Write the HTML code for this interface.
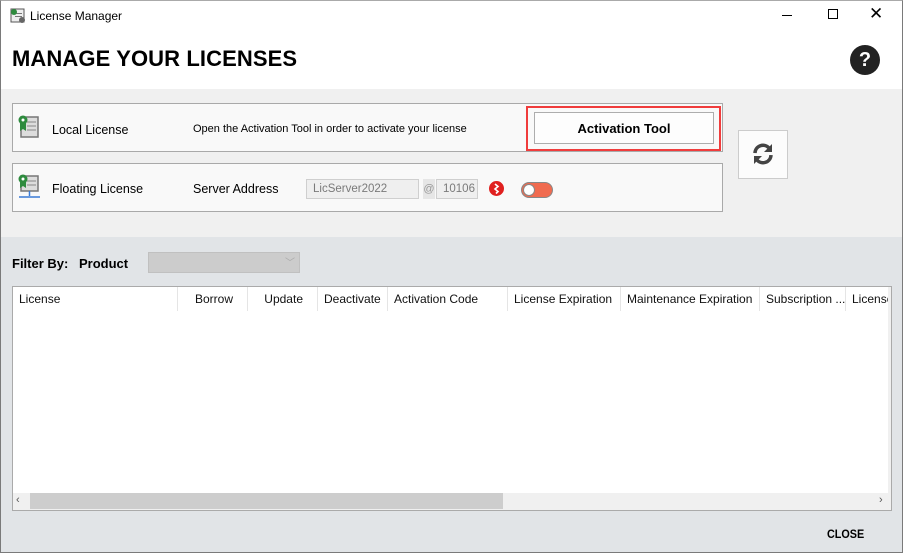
<!DOCTYPE html>
<html><head><meta charset="utf-8"><style>
*{margin:0;padding:0;box-sizing:border-box}
body{width:903px;height:553px;overflow:hidden;font-family:"Liberation Sans",sans-serif;font-size:12px;color:#000;background:#fff;position:relative}
.win{position:absolute;left:0;top:0;width:903px;height:553px;border:1px solid #7a7a7a;border-top:1px solid #aaa}
.abs{position:absolute}
.panel{position:absolute;background:#f9f9f9;border:1px solid #a9a9a9}
.inp{position:absolute;background:#efefef;border:1px solid #cfcfcf;color:#7a7a7a;font-size:11.5px;padding:3px 6px}
.th{position:absolute;top:0;height:24px;line-height:24px;font-size:12px;color:#111;border-right:1px solid #e5e5e5;padding-left:6px;white-space:nowrap;overflow:hidden}
</style></head><body>
<div class="abs" style="left:1px;top:89px;width:901px;height:148px;background:#f0f0f0"></div>
<div class="abs" style="left:1px;top:237px;width:901px;height:315px;background:#e1e4e7"></div>
<div class="win"></div>
<svg class="abs" style="left:10px;top:8px" width="16" height="16" viewBox="0 0 16 16"><rect x="1" y="1" width="13" height="13" fill="#eee" stroke="#555"/><rect x="5" y="5" width="7" height="1" fill="#777"/><rect x="5" y="8" width="7" height="1" fill="#777"/><circle cx="4" cy="4" r="3" fill="#2e8b3e"/><circle cx="12" cy="12" r="3" fill="#666"/></svg>
<div class="abs" style="left:30px;top:9px;font-size:12px">License Manager</div>
<div class="abs" style="left:782px;top:15px;width:10px;height:1px;background:#000"></div>
<div class="abs" style="left:828px;top:9px;width:10px;height:10px;border:1px solid #000"></div>
<div class="abs" style="left:869px;top:4px;font-size:17px;font-weight:300">✕</div>
<div class="abs" style="left:12px;top:46px;font-size:22px;font-weight:bold;letter-spacing:0.1px">MANAGE YOUR LICENSES</div>
<div class="abs" style="left:850px;top:45px;width:30px;height:30px;border-radius:50%;background:#222;color:#fff;font-weight:bold;font-size:20px;text-align:center;line-height:30px">?</div>
<div class="panel" style="left:12px;top:103px;width:711px;height:49px"></div>
<div class="panel" style="left:12px;top:163px;width:711px;height:49px"></div>
<svg class="abs" style="left:17px;top:114px" width="26" height="26" viewBox="0 0 26 26"><rect x="4" y="3" width="17" height="20" fill="#ddd" stroke="#777" stroke-width="1.5"/><path d="M10 8h9M10 12h9M10 16h9" stroke="#888"/><path d="M3 8v9l3-2 3 2v-9" fill="#2e8b3e"/><circle cx="6" cy="6" r="4.5" fill="#2e8b3e"/><circle cx="6" cy="6" r="1.5" fill="#fff"/></svg>
<svg class="abs" style="left:17px;top:173px" width="26" height="30" viewBox="0 0 26 30"><rect x="4" y="3" width="17" height="15" fill="#ddd" stroke="#777" stroke-width="1.5"/><path d="M10 8h9M10 12h9" stroke="#888"/><path d="M3 8v7l3-2 3 2v-7" fill="#2e8b3e"/><circle cx="6" cy="6" r="4.5" fill="#2e8b3e"/><circle cx="6" cy="6" r="1.5" fill="#fff"/><path d="M12.5 18v5M2 24h21" stroke="#3a7bd5" stroke-width="1.5"/></svg>
<div class="abs" style="left:52px;top:123px;font-size:12.5px">Local License</div>
<div class="abs" style="left:193px;top:123px;font-size:11px">Open the Activation Tool in order to activate your license</div>
<div class="abs" style="left:526px;top:106px;width:195px;height:45px;border:2px solid #f03c3c"></div>
<div class="abs" style="left:534px;top:112px;width:180px;height:32px;border:1px solid #adadad;background:#fdfdfd;text-align:center;line-height:31px;font-weight:bold;font-size:13px">Activation Tool</div>
<div class="abs" style="left:52px;top:182px;font-size:12.5px">Floating License</div>
<div class="abs" style="left:193px;top:182px;font-size:12.5px">Server Address</div>
<div class="inp" style="left:306px;top:179px;width:113px;height:20px">LicServer2022</div>
<div class="abs" style="left:423px;top:179px;width:12px;height:20px;background:#e6e6e6;color:#999;font-size:11px;line-height:20px;text-align:center">@</div>
<div class="inp" style="left:436px;top:179px;width:42px;height:20px">10106</div>
<svg class="abs" style="left:489px;top:181px" width="15" height="15" viewBox="0 0 15 15"><circle cx="7.5" cy="7.5" r="7.5" fill="#e0201f"/><path d="M6 3l3 2.5-3 2.5 3 2.5-2 2" fill="none" stroke="#fff" stroke-width="1.6"/></svg>
<div class="abs" style="left:521px;top:182px;width:32px;height:16px;border-radius:8px;background:#f06b50;border:1px solid #888"></div>
<div class="abs" style="left:523px;top:184px;width:12px;height:12px;border-radius:50%;background:#fff;border:1px solid #888"></div>
<div class="abs" style="left:738px;top:130px;width:50px;height:49px;background:#fcfcfc;border:1px solid #ccc"></div>
<svg class="abs" style="left:751px;top:142px" width="24" height="24" viewBox="0 0 24 24"><path d="M4 11a8 8 0 0 1 14-5" fill="none" stroke="#444" stroke-width="3.5"/><path d="M21 2v8h-8z" fill="#444"/><path d="M20 13a8 8 0 0 1-14 5" fill="none" stroke="#444" stroke-width="3.5"/><path d="M3 22v-8h8z" fill="#444"/></svg>
<div class="abs" style="left:12px;top:256px;font-weight:bold;font-size:13px">Filter By:</div>
<div class="abs" style="left:79px;top:256px;font-weight:bold;font-size:13px">Product</div>
<div class="abs" style="left:148px;top:252px;width:152px;height:21px;background:#ccc;border:1px solid #c0c0c0"></div>
<div class="abs" style="left:285px;top:254px;color:#aaa;font-size:10px">﹀</div>
<div class="abs" style="left:12px;top:286px;width:880px;height:225px;background:#fff;border:1px solid #aaa;overflow:hidden">
<div class="th" style="left:0;width:165px">License</div>
<div class="th" style="left:165px;width:70px;text-align:right;padding-right:14px">Borrow</div>
<div class="th" style="left:235px;width:70px;text-align:right;padding-right:14px">Update</div>
<div class="th" style="left:305px;width:70px">Deactivate</div>
<div class="th" style="left:375px;width:120px">Activation Code</div>
<div class="th" style="left:495px;width:113px">License Expiration</div>
<div class="th" style="left:608px;width:139px">Maintenance Expiration</div>
<div class="th" style="left:747px;width:86px">Subscription ...</div>
<div class="th" style="left:833px;width:60px">License</div>
<div class="abs" style="left:0;top:206px;width:878px;height:17px;background:#f0f0f0"></div>
<div class="abs" style="left:17px;top:206px;width:473px;height:16px;background:#cdcdcd"></div>
<div class="abs" style="left:3px;top:207px;font-size:11px;color:#555">‹</div>
<div class="abs" style="left:866px;top:207px;font-size:11px;color:#555">›</div>
</div>
<div class="abs" style="left:888px;top:287px;width:3px;height:223px;background:#f0f0f0"></div>
<div class="abs" style="left:827px;top:527px;font-weight:bold;font-size:12px;transform:scaleX(0.9);transform-origin:left">CLOSE</div>
</body></html>
